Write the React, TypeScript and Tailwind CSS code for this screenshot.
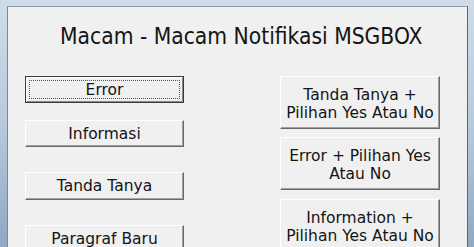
import React from "react";

const font = { fontFamily: '"DejaVu Sans Condensed", "DejaVu Sans", Tahoma, sans-serif' };
const btnFont = { fontFamily: '"DejaVu Sans", Tahoma, sans-serif' };

export default function App() {
  return (
    <div
      className="w-[474px] h-[247px] overflow-hidden flex bg-gradient-to-b from-[#cfdbe8] via-[#b9cadd] to-[#8fa8c4] pl-[7px] pt-[6px] pr-[6px]"
      style={font}
    >
      <div className="flex-1 flex flex-col bg-[#f0f0f0] border-l border-t border-r border-l-[#7d8895] border-t-[#8d98a4] border-r-[#5e646b]">
        <h1 className="mt-[15px] pl-[52px] text-[22.6px] leading-[28px] text-[#141414] font-normal whitespace-nowrap">
          Macam - Macam Notifikasi MSGBOX
        </h1>
        <div className="flex mt-[26px] pl-[17px]" style={btnFont}>
          <div className="flex flex-col w-[159px]">
            <FocusButton label="Error" />
            <Button label="Informasi" className="mt-[17px] h-[27px]" />
            <Button label="Tanda Tanya" className="mt-[25px] h-[28px]" />
            <Button label="Paragraf Baru" className="mt-[25px] h-[28px]" />
          </div>
          <div className="flex flex-col w-[160px] ml-[96px]">
            <Button label={["Tanda Tanya +", "Pilihan Yes Atau No"]} className="h-[53px] pt-[3px]" />
            <Button label={["Error + Pilihan Yes", "Atau No"]} className="mt-[8px] h-[53px] pt-[3px]" />
            <Button label={["Information +", "Pilihan Yes Atau No"]} className="mt-[9px] h-[53px] pt-[3px]" />
          </div>
        </div>
      </div>
    </div>
  );
}

const Button = ({ label, className = "" }: { label: string | string[]; className?: string }) => (
  <div
    className={
      "flex flex-col items-center justify-center border border-t-white border-l-white border-b-[#696969] border-r-[#696969] shadow-[inset_-1px_-1px_0_#a0a0a0] bg-[#f0f0f0] text-[15.5px] leading-[18px] text-[#141414] whitespace-nowrap " +
      className
    }
  >
    {Array.isArray(label) ? label.map((l) => <span key={l}>{l}</span>) : <span>{label}</span>}
  </div>
);

const FocusButton = ({ label }: { label: string }) => (
  <div className="h-[27px] border border-[#3a3a3a] flex">
    <div className="flex-1 flex p-[2px] border border-t-white border-l-white border-b-[#8a8a8a] border-r-[#8a8a8a]">
      <div className="flex-1 flex items-center justify-center border border-dotted border-[#555] text-[15.5px] leading-[18px] text-[#141414]">
        {label}
      </div>
    </div>
  </div>
);
